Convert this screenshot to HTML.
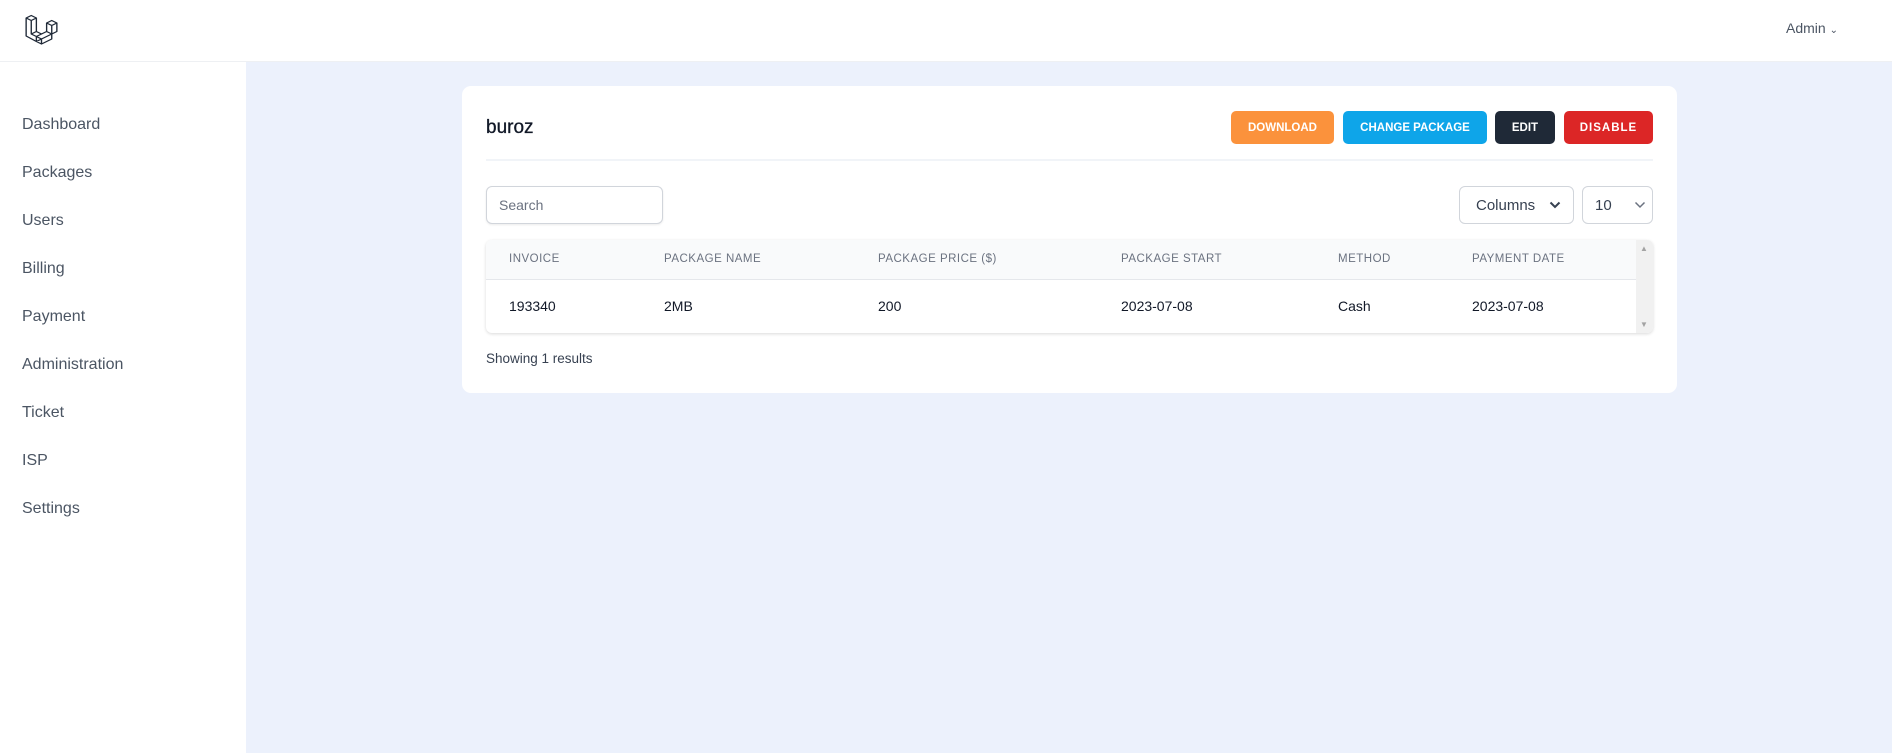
<!DOCTYPE html>
<html><head><meta charset="utf-8"><style>
*{box-sizing:border-box;margin:0;padding:0}
body{width:1892px;height:753px;overflow:hidden;font-family:"Liberation Sans",sans-serif;background:#ecf1fc;color:#1f2937;position:relative}
.hdr{position:absolute;left:0;top:0;width:1892px;height:62px;background:#fff;border-bottom:1px solid #eef0f3}
.side{position:absolute;left:0;top:62px;width:246px;height:691px;background:#fff}
.side div{position:absolute;left:22px;font-size:16px;color:#4b5563}
.card{position:absolute;left:462px;top:86px;width:1215px;height:307px;background:#fff;border-radius:9px}
.abs{position:absolute}
.btn{position:absolute;top:111px;height:33px;border-radius:5px;color:#fff;font-size:11.5px;font-weight:bold;display:flex;align-items:center;justify-content:center}
.box{position:absolute;border:1px solid #d1d5db;border-radius:6px;background:#fff;font-size:15px;display:flex;align-items:center}
.th{position:absolute;top:253px;font-size:11.5px;color:#6b7280;letter-spacing:.5px}
.td{position:absolute;top:298px;font-size:14px;color:#111827}
</style></head><body>
<div class="hdr">
<svg class="abs" style="left:25px;top:13px" width="33" height="33" viewBox="0 0 29 33" preserveAspectRatio="none" fill="none" stroke="#1f2937" stroke-width="1.2" stroke-linejoin="round">
<path d="M1 5 L5.5 2.5 L10 5 L5.5 7.5 Z M1 5 V23 L10 28.5 L19 23.5 M5.5 7.5 V21 L10 23.5 M10 5 V18.5 L5.5 21 M10 18.5 L14.5 21 M10 23.5 L19 18.5 L23.5 21 L14.5 26 L10 23.5 M10 23.5 V28.5 M14.5 26 V31 L10 28.5 M14.5 31 L23.5 26 V21 M19 18.5 V10 L23.5 7.5 L28 10 V18.5 L23.5 21 M19 10 L23.5 12.5 L28 10 M23.5 12.5 V21"/>
</svg>
<div class="abs" style="left:1786px;top:20px;font-size:14px;color:#4b5563">Admin <span style="font-size:10px">&#8964;</span></div>
</div>
<div class="side">
<div style="top:54px">Dashboard</div>
<div style="top:102px">Packages</div>
<div style="top:150px">Users</div>
<div style="top:198px">Billing</div>
<div style="top:246px">Payment</div>
<div style="top:294px">Administration</div>
<div style="top:342px">Ticket</div>
<div style="top:390px">ISP</div>
<div style="top:438px">Settings</div>
</div>
<div class="card"></div>
<div class="abs" style="left:486px;top:117px;font-size:19px;color:#111827;-webkit-text-stroke:.3px #111827">buroz</div>
<div class="btn" style="left:1231px;width:103px;background:#fb923c">DOWNLOAD</div>
<div class="btn" style="left:1343px;width:144px;background:#0ea5e9">CHANGE PACKAGE</div>
<div class="btn" style="left:1495px;width:60px;background:#1f2937">EDIT</div>
<div class="btn" style="left:1564px;width:89px;background:#dc2626;letter-spacing:1px">DISABLE</div>
<div class="abs" style="left:486px;top:159px;width:1167px;height:2px;background:#f1f4f8"></div>
<div class="box" style="left:486px;top:186px;width:177px;height:38px;padding-left:12px;color:#6b7280;font-size:14px;box-shadow:0 1px 2px rgba(0,0,0,.08)">Search</div>
<div class="box" style="left:1459px;top:186px;width:115px;height:38px;padding-left:16px;color:#374151">Columns <svg style="margin-left:14px" width="12" height="8" viewBox="0 0 12 8"><path d="M1.5 1.5 L6 6 L10.5 1.5" stroke="#374151" stroke-width="2" fill="none"/></svg></div>
<div class="box" style="left:1582px;top:186px;width:71px;height:38px;padding-left:12px;color:#374151">10 <svg style="margin-left:22px" width="12" height="8" viewBox="0 0 12 8"><path d="M1.5 1.5 L6 6 L10.5 1.5" stroke="#6b7280" stroke-width="1.5" fill="none"/></svg></div>
<div class="abs" style="left:486px;top:240px;width:1167px;height:93px;background:#fff;border-radius:6px;box-shadow:0 1px 3px rgba(0,0,0,.15);overflow:hidden">
<div class="abs" style="left:0;top:0;width:1150px;height:40px;background:#f9fafb;border-bottom:1px solid #e5e7eb"></div>
<div class="abs" style="left:1150px;top:0;width:17px;height:93px;background:#f1f1f1"></div>
<div class="abs" style="left:1154px;top:4px;font-size:8px;color:#a3a3a3">&#9650;</div>
<div class="abs" style="left:1154px;top:80px;font-size:8px;color:#a3a3a3">&#9660;</div>
</div>
<div class="th" style="left:509px">INVOICE</div>
<div class="th" style="left:664px">PACKAGE NAME</div>
<div class="th" style="left:878px">PACKAGE PRICE ($)</div>
<div class="th" style="left:1121px">PACKAGE START</div>
<div class="th" style="left:1338px">METHOD</div>
<div class="th" style="left:1472px">PAYMENT DATE</div>
<div class="td" style="left:509px">193340</div>
<div class="td" style="left:664px">2MB</div>
<div class="td" style="left:878px">200</div>
<div class="td" style="left:1121px">2023-07-08</div>
<div class="td" style="left:1338px">Cash</div>
<div class="td" style="left:1472px">2023-07-08</div>
<div class="abs" style="left:486px;top:351px;font-size:13.5px;color:#374151">Showing 1 results</div>
</body></html>
